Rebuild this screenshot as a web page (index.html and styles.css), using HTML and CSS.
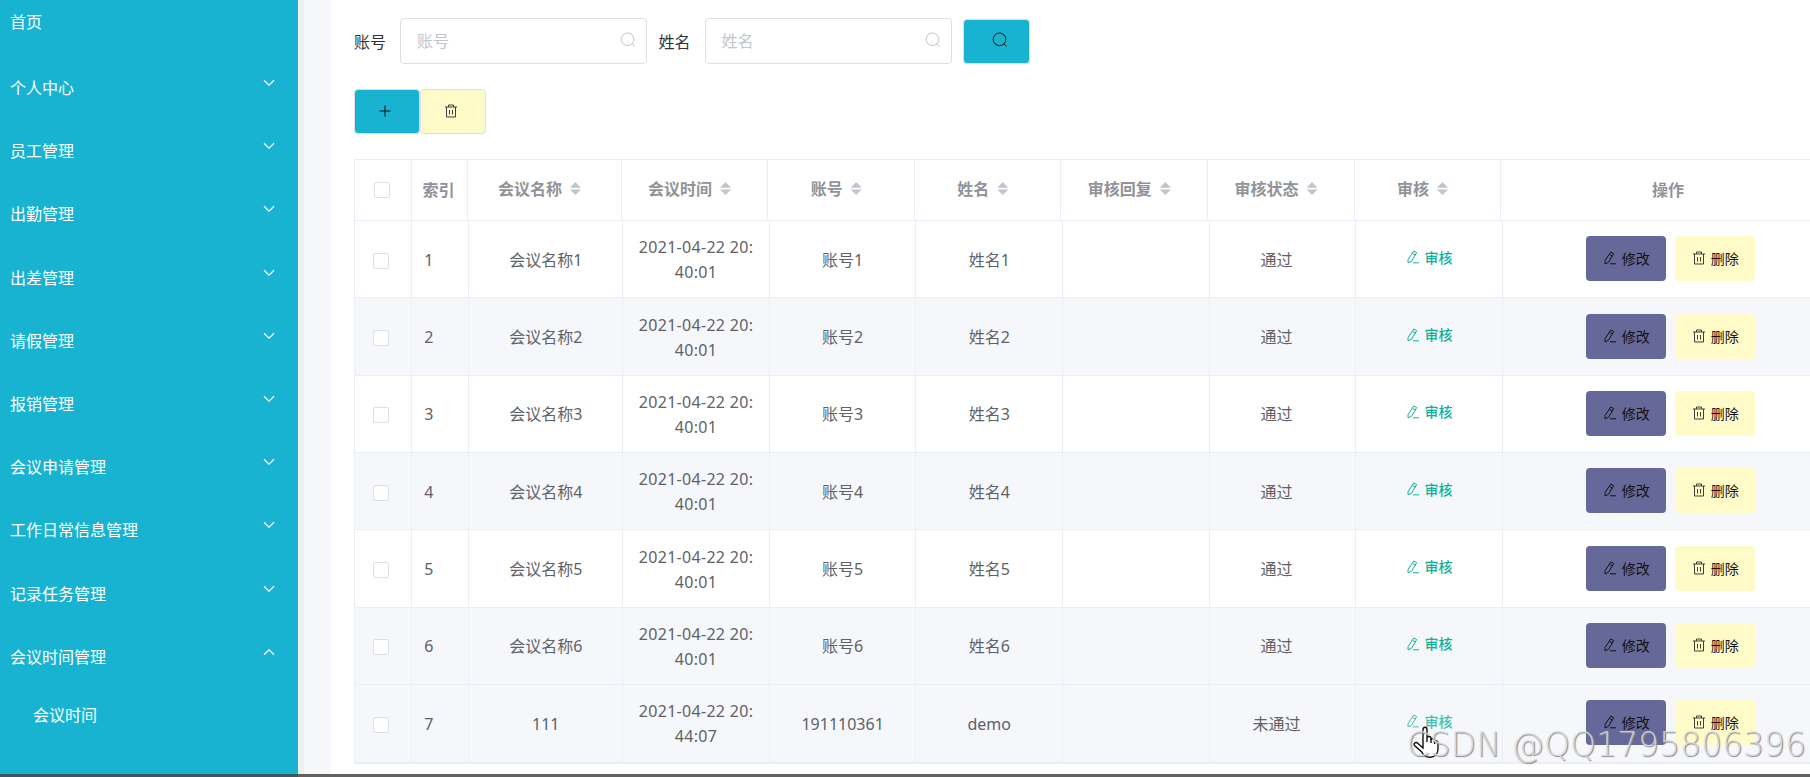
FILE: index.html
```html
<!DOCTYPE html>
<html lang="zh-CN">
<head>
    <meta charset="UTF-8">
    <meta name="viewport" content="width=device-width, initial-scale=1.0">
    <title>会议时间管理</title>
    <link rel="stylesheet" href="styles.css">
</head>
<body>
    <svg class="symbols">
        <symbol id="arrow" viewBox="0 0 12 8"><path d="M1 1.2l5 5 5-5"/></symbol>
        <symbol id="search" viewBox="0 0 16 16"><circle cx="7.5" cy="7.3" r="6.3"/><path d="M12 12l2.6 2.6"/></symbol>
        <symbol id="plus" viewBox="0 0 12 12"><path d="M6 .5v11M.5 6h11"/></symbol>
        <symbol id="trash" viewBox="0 0 14 14"><path d="M1 3h12M4.5 3V1h5v2M2.5 3v10h9V3M5.5 6v4.5M8.5 6v4.5"/></symbol>
        <symbol id="edit" viewBox="0 0 14 14"><path d="M7.8 1l2.9 1.600-5.2 8.700L2 12.8l.1-3.4zM6.6 3.400l2.800 1.700M7 12.800h6"/></symbol>
        <symbol id="hand" viewBox="0 0 26 32"><path d="M10 17V3.5C10 .5 14 .5 14 3.5V12c0-2 4-2 4 .5V14c0-2 3.600-1.500 3.600.7V16c0-1.800 3.400-1.500 3.400.7v6c0 5-3 8.500-8 8.500-5 0-6.500-2-8.500-5.500L1.500 19.500c-1.500-2.500 1.500-4 3.500-2l5 4.500z"/><path d="M14 12v4M18 13v4M21.600 15v3"/></symbol>
    </svg>
    <div class="layout">
        <div class="sidebar">
            <div class="menu-home">首页</div>
            <ul class="menu" id="menu"></ul>
            <div class="submenu">会议时间</div>
        </div>
        <div class="gutter"></div>
        <div class="main">
            <div class="search-form">
                <label>账号</label>
                <div class="input"><span>账号</span><svg class="icon-search"><use href="#search"/></svg></div>
                <label>姓名</label>
                <div class="input"><span>姓名</span><svg class="icon-search"><use href="#search"/></svg></div>
                <button class="btn-search"><svg class="icon-search"><use href="#search"/></svg></button>
            </div>
            <div class="toolbar">
                <button class="btn-add"><svg class="icon-plus"><use href="#plus"/></svg></button>
                <button class="btn-remove"><svg class="icon-trash"><use href="#trash"/></svg></button>
            </div>
            <div class="table">
                <div class="thead">
                    <div class="th"><i class="checkbox"></i></div>
                    <div class="th">索引</div>
                    <div class="th sortable">会议名称<i class="sort"></i></div>
                    <div class="th sortable">会议时间<i class="sort"></i></div>
                    <div class="th sortable">账号<i class="sort"></i></div>
                    <div class="th sortable">姓名<i class="sort"></i></div>
                    <div class="th sortable">审核回复<i class="sort"></i></div>
                    <div class="th sortable">审核状态<i class="sort"></i></div>
                    <div class="th sortable">审核<i class="sort"></i></div>
                    <div class="th">操作</div>
                </div>
                <div id="rows"></div>
            </div>
        </div>
    </div>
    <svg class="cursor"><use href="#hand"/></svg>
    <div class="watermark">CSDN @QQ1795806396</div>
    <div class="bottom-bar"></div>

    <script>
        const menus = ["个人中心", "员工管理", "出勤管理", "出差管理", "请假管理", "报销管理", "会议申请管理", "工作日常信息管理", "记录任务管理", "会议时间管理"];
        document.getElementById("menu").innerHTML = menus.map((name, i) =>
            `<li class="${i === menus.length - 1 ? "open" : ""}"><span>${name}</span><svg class="icon-arrow"><use href="#arrow"/></svg></li>`
        ).join("");

        const list = [];
        for (let i = 1; i <= 6; i++) {
            list.push(["会议名称" + i, "40:01", "账号" + i, "姓名" + i, "通过"]);
        }
        list.push(["111", "44:07", "191110361", "demo", "未通过"]);

        document.getElementById("rows").innerHTML = list.map((row, i) => `
            <div class="tr">
                <div class="td"><i class="checkbox"></i></div>
                <div class="td index">${i + 1}</div>
                <div class="td">${row[0]}</div>
                <div class="td date">2021-04-22 20:<br>${row[1]}</div>
                <div class="td">${row[2]}</div>
                <div class="td">${row[3]}</div>
                <div class="td"></div>
                <div class="td status">${row[4]}</div>
                <div class="td"><a class="audit"><svg class="icon-edit"><use href="#edit"/></svg>审核</a></div>
                <div class="td actions">
                    <button class="btn-edit"><svg class="icon-edit"><use href="#edit"/></svg>修改</button>
                    <button class="btn-delete"><svg class="icon-trash"><use href="#trash"/></svg>删除</button>
                </div>
            </div>`).join("");
    </script>
</body>
</html>
```
FILE: styles.css
```css
* {
    margin: 0;
    padding: 0;
    box-sizing: border-box;
}
body {
    height: 777px;
    overflow: hidden;
    background: #fff;
    font-family: "Noto Sans", "Noto Sans CJK SC", sans-serif;
    font-size: 16px;
    color: #606266;
}
svg {
    fill: none;
    stroke: currentColor;
    flex: none;
}
.symbols {
    display: none;
}
.layout {
    display: flex;
    height: 777px;
}
.sidebar {
    width: 298px;
    flex: none;
    background: #17b3d1;
    color: #fff;
    line-height: 24px;
}
.menu-home {
    padding: 10px 0 0 10px;
    height: 57px;
}
.menu {
    list-style: none;
}
.menu li {
    display: flex;
    justify-content: space-between;
    height: 63.2px;
    padding: 19px 23px 0 10px;
}
.icon-arrow {
    width: 12px;
    height: 8px;
    margin-top: 3px;
    stroke-width: 1.3;
}
.open .icon-arrow {
    transform: rotate(180deg);
}
.submenu {
    padding: 14px 0 0 33px;
}
.gutter {
    width: 33px;
    flex: none;
    background: #f5f7fa;
    border-left: 6px solid #eeefef;
}
.main {
    flex: 1;
    min-width: 0;
    padding: 18px 0 0 23px;
    overflow: hidden;
}
.search-form {
    display: flex;
    align-items: center;
    height: 46px;
    color: #303133;
}
.search-form label {
    width: 46px;
}
.input {
    display: flex;
    align-items: center;
    justify-content: space-between;
    width: 247px;
    height: 46px;
    margin-right: 11.5px;
    padding: 0 10px 2px 16px;
    border: 1px solid #dcdfe6;
    border-radius: 4px;
    color: #bfc4cd;
}
.icon-search {
    width: 16px;
    height: 16px;
}
button {
    display: flex;
    align-items: center;
    justify-content: center;
    border: 1px solid #dcdfe6;
    border-radius: 4px;
    font-family: inherit;
    color: #111;
}
.btn-search {
    width: 67px;
    height: 45px;
    padding: 0 0 2px 6px;
    background: #17b3d1;
}
.toolbar {
    display: flex;
    padding-top: 25px;
}
.toolbar button {
    width: 66px;
    height: 45px;
    padding: 0 5px 2px 0;
}
.toolbar .btn-add {
    background: #17b3d1;
}
.toolbar .btn-remove {
    background: #fffbc9;
}
.icon-plus {
    width: 12px;
    height: 12px;
}
.icon-trash, .icon-edit {
    width: 14px;
    height: 14px;
}
.icon-trash {
    opacity: 0.8;
}
.table {
    width: 1484px;
    margin-top: 25px;
    border: 1px solid #ebeef5;
    border-right: none;
}
.thead, .tr {
    display: grid;
    grid-template-columns: 57.3px 57px 154px 146.5px 146.7px 146.5px 146.7px 146.7px 146.3px 337px;
}
.thead {
    grid-template-columns: 57px 56px 153.8px 146.5px 146.7px 146.5px 146.7px 146.7px 146.2px 337px;
    height: 61px;
    border-bottom: 1px solid #ebeef5;
    color: #909399;
    font-weight: 600;
}
.th, .td {
    display: flex;
    align-items: center;
    justify-content: center;
    border-right: 1px solid #ebeef5;
    text-align: center;
}
.th {
    padding: 0 2px 2px 0;
}
.th.sortable {
    padding: 0 10px 4px 0;
}
.sort {
    width: 11px;
    height: 13px;
    margin: 1px 0 0 8px;
    background: #c0c4cc;
    clip-path: polygon(50% 0, 100% 44%, 0 44%, 0 58%, 100% 58%, 50% 100%, 0 58%, 0 44%);
}
.tr {
    height: 77.37px;
    border-bottom: 1px solid #ebeef5;
    line-height: 25px;
}
.td {
    padding-top: 2px;
}
.tr:nth-child(even), .tr:last-child {
    background: #f5f7fb;
}
.checkbox {
    width: 16px;
    height: 16px;
    margin-top: 2px;
    border: 1px solid #dcdfe6;
    border-radius: 2px;
    background: #fff;
}
.td .checkbox {
    margin: 1px 5px 0 0;
}
.td.index {
    justify-content: flex-start;
    padding-left: 12px;
}
.date {
    letter-spacing: 0.3px;
}
.status {
    padding-right: 12px;
}
.audit {
    display: flex;
    align-items: center;
    gap: 5px;
    padding-bottom: 6px;
    font-size: 14px;
    font-weight: 500;
    color: #12b09a;
}
.tr:last-child .audit {
    color: #42bfae;
}
.td.actions {
    gap: 9px;
    padding: 0 0 1px;
}
.actions button {
    gap: 5px;
    width: 80px;
    height: 45px;
    padding-bottom: 1px;
    border: none;
    font-size: 14px;
}
.btn-edit {
    background: #666899;
}
.btn-delete {
    background: #fffbc9;
}
/* overlays */
.cursor {
    position: absolute;
    left: 1413px;
    top: 726px;
    width: 26px;
    height: 32px;
    fill: #fff;
    stroke: #111;
    stroke-width: 1.4;
}
.watermark {
    position: absolute;
    right: 4px;
    top: 723px;
    font-family: "DejaVu Sans", sans-serif;
    font-weight: 200;
    font-size: 33px;
    line-height: 44px;
    white-space: nowrap;
    color: rgba(225, 225, 225, 0.8);
    text-shadow: 1px 1px 1px #888;
}
.bottom-bar {
    position: absolute;
    left: 0;
    right: 0;
    bottom: 0;
    height: 3px;
    background: rgba(70, 70, 70, 0.85);
}
```
